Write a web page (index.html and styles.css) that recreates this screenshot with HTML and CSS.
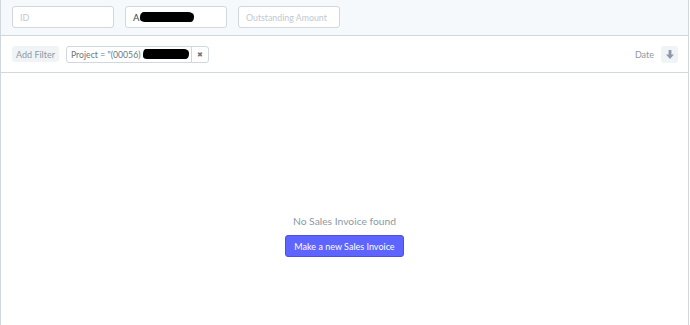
FILE: index.html
```html
<!DOCTYPE html>
<html lang="en">

<head>
  <meta charset="UTF-8">
  <title>Sales Invoice</title>
  <link rel="stylesheet" href="styles.css">
</head>

<body>
  <div class="list">
    <div class="standard-filters">
      <input class="input" type="text" placeholder="ID">
      <div class="input filled">A<span class="redact redact-input"></span></div>
      <input class="input" type="text" placeholder="Outstanding Amount">
    </div>

    <div class="filter-bar">
      <button class="btn-light">Add Filter</button>
      <div class="chip">
        <span class="chip-label">Project = "(00056)<span class="redact redact-chip"></span></span>
        <span class="chip-remove">&#10006;</span>
      </div>
      <div class="sort">
        <span class="sort-label">Date</span>
        <button class="btn-light sort-btn">
          <svg width="8" height="9" viewBox="0 0 8 9">
            <path d="M2.6 0h2.8v4.4H8L4 9 0 4.4h2.6z" fill="#8d99a6" />
          </svg>
        </button>
      </div>
    </div>

    <div class="empty">
      <p class="empty-text">No Sales Invoice found</p>
      <button class="btn-primary">Make a new Sales Invoice</button>
    </div>
  </div>
</body>

</html>
```

FILE: styles.css
```css
body {
  margin: 0;
  font-family: Lato, "Liberation Sans", sans-serif;
  background: #fff;
}

.list {
  width: 687px;
  height: 325px;
  border-left: 1px solid #d1d8dd;
  border-right: 1px solid #d1d8dd;
  display: flex;
  flex-direction: column;
}

.standard-filters {
  height: 36px;
  box-sizing: border-box;
  padding: 6px 11px;
  background: #f5f9fc;
  border-bottom: 1px solid #d1d8dd;
  display: flex;
  gap: 11px;
}

.input {
  width: 102px;
  height: 22px;
  box-sizing: border-box;
  border: 1px solid #d1d8dd;
  border-radius: 3px;
  background: #fff;
  padding: 0 7px;
  font-family: inherit;
  font-size: 8.8px;
  color: #36414c;
  outline: none;
}

.input::placeholder {
  color: #c0c9d1;
}

.filled {
  display: flex;
  align-items: center;
  font-size: 9.5px;
}

.redact {
  display: inline-block;
  background: #000;
}

.redact-input {
  width: 54px;
  height: 10px;
  margin-left: 1px;
  border-radius: 4px 6px 3px 5px / 5px 4px 5px 3px;
}

.redact-chip {
  width: 46px;
  height: 10px;
  margin-left: 2px;
  vertical-align: -2px;
  border-radius: 3px 5px 3px 4px / 5px 4px 5px 3px;
}

.filter-bar {
  height: 37px;
  box-sizing: border-box;
  padding: 0 10px 0 11px;
  border-bottom: 1px solid #d1d8dd;
  display: flex;
  align-items: center;
}

.btn-light {
  height: 16px;
  box-sizing: border-box;
  border: none;
  border-radius: 3px;
  background: #f0f4f7;
  color: #8d99a6;
  font-family: inherit;
  font-size: 9px;
  padding: 0 4px;
  cursor: pointer;
}

.chip {
  margin-left: 7px;
  height: 17px;
  box-sizing: border-box;
  border: 1px solid #d1d8dd;
  border-radius: 3px;
  display: flex;
  align-items: stretch;
  font-size: 8.7px;
  color: #6c7680;
}

.chip-label {
  padding: 0 2px 0 4px;
  display: flex;
  align-items: center;
  white-space: nowrap;
}

.chip-remove {
  width: 16px;
  border-left: 1px solid #d1d8dd;
  display: flex;
  align-items: center;
  justify-content: center;
  font-size: 7px;
  color: #6c7680;
}

.sort {
  margin-left: auto;
  display: flex;
  align-items: center;
  gap: 7px;
}

.sort-label {
  font-size: 9px;
  color: #8d99a6;
}

.sort-btn {
  width: 17px;
  height: 17px;
  padding: 0;
  display: flex;
  align-items: center;
  justify-content: center;
}

.empty {
  flex: 1;
  display: flex;
  flex-direction: column;
  align-items: center;
  padding-top: 142px;
}

.empty-text {
  margin: 0 0 8px;
  font-size: 10.3px;
  color: #8d99a6;
}

.btn-primary {
  height: 22px;
  padding: 0 8px;
  border: 1px solid #4a50e6;
  border-radius: 3px;
  background: #5e64ff;
  color: #fff;
  font-family: inherit;
  font-size: 9px;
  cursor: pointer;
}
```
